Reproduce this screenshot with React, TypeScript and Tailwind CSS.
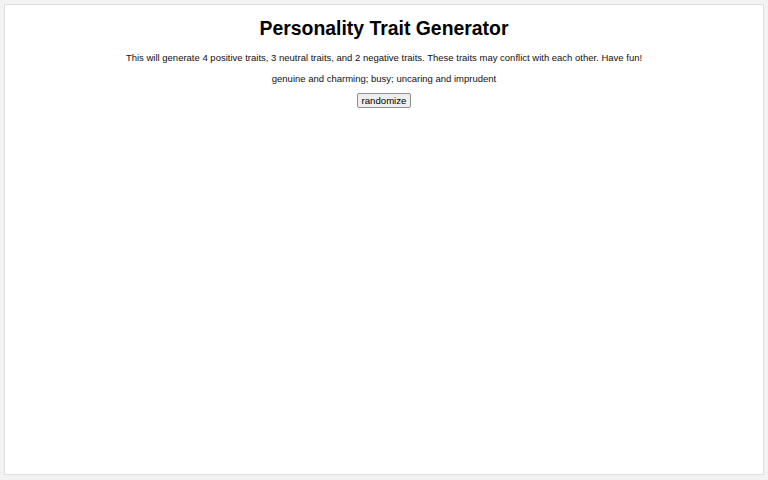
import React, { useState } from 'react';

const positive = ['genuine', 'charming', 'kind', 'honest', 'loyal', 'brave', 'patient', 'witty'];
const neutral = ['busy', 'quiet', 'curious', 'formal', 'dreamy'];
const negative = ['uncaring', 'imprudent', 'lazy', 'vain', 'moody', 'stubborn'];

const pick = (list: string[], n: number) => [...list].sort(() => Math.random() - 0.5).slice(0, n);

export default function App() {
  const [traits, setTraits] = useState('genuine and charming; busy; uncaring and imprudent');

  const randomize = () => {
    const p = pick(positive, 2);
    const m = pick(neutral, 1);
    const n = pick(negative, 2);
    setTraits(`${p.join(' and ')}; ${m[0]}; ${n.join(' and ')}`);
  };

  return (
    <div className="h-[480px] bg-[#f3f3f3] p-[4px] font-['Liberation_Sans',Arial,sans-serif] text-black">
      <div className="h-[471px] bg-white border border-[#dedede] flex flex-col items-center">
        <h1 className="mt-[12px] text-[19.4px] leading-[23px] font-bold">Personality Trait Generator</h1>
        <p className="mt-[12px] text-[9.5px] leading-[12px] text-[#111]">
          This will generate 4 positive traits, 3 neutral traits, and 2 negative traits. These traits may conflict with each other. Have fun!
        </p>
        <p className="mt-[9px] text-[9.5px] leading-[12px] text-[#111]">{traits}</p>
        <button
          onClick={randomize}
          className="mt-[8px] h-[15px] px-[4px] text-[9.6px] leading-[12px] bg-[#efefef] border border-[#8f8f8f] rounded-[2px]"
        >
          randomize
        </button>
      </div>
    </div>
  );
}
